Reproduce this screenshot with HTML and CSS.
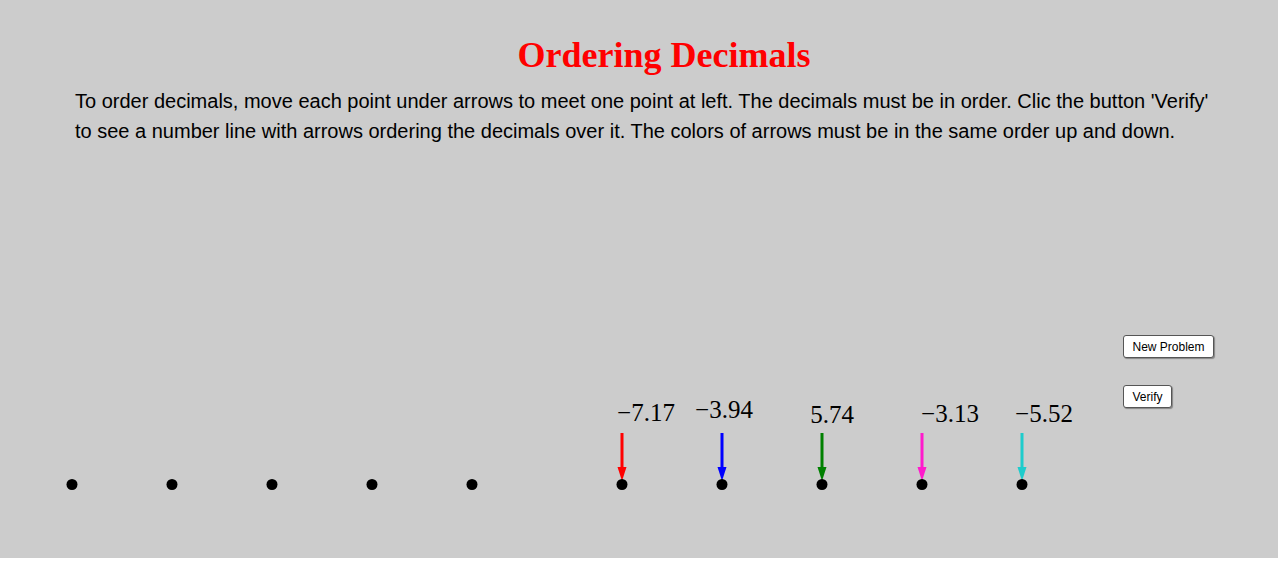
FILE: index.html
```html
<!DOCTYPE html>
<html>
<head>
<meta charset="utf-8">
<link rel="stylesheet" href="styles.css">
</head>
<body>
<div class="app">
  <h1 class="title">Ordering Decimals</h1>
  <p class="intro">To order decimals, move each point under arrows to meet one point at left. The decimals must be in order. Clic the button 'Verify' to see a number line with arrows ordering the decimals over it. The colors of arrows must be in the same order up and down.</p>
  <svg class="canvas" width="1278" height="558" viewBox="0 0 1278 558">
    <g class="labels">
      <text x="646" y="421">−7.17</text>
      <text x="724" y="418">−3.94</text>
      <text x="832" y="423">5.74</text>
      <text x="950" y="422">−3.13</text>
      <text x="1044" y="422">−5.52</text>
    </g>
    <g stroke-width="3">
      <line x1="622" y1="433" x2="622" y2="468" stroke="#ff0000"/>
      <polygon points="617.5,467 626.5,467 622,481" fill="#ff0000"/>
      <line x1="722" y1="433" x2="722" y2="468" stroke="#0000ff"/>
      <polygon points="717.5,467 726.5,467 722,481" fill="#0000ff"/>
      <line x1="822" y1="433" x2="822" y2="468" stroke="#008000"/>
      <polygon points="817.5,467 826.5,467 822,481" fill="#008000"/>
      <line x1="922" y1="433" x2="922" y2="468" stroke="#ff1acc"/>
      <polygon points="917.5,467 926.5,467 922,481" fill="#ff1acc"/>
      <line x1="1022" y1="433" x2="1022" y2="468" stroke="#1ecccc"/>
      <polygon points="1017.5,467 1026.5,467 1022,481" fill="#1ecccc"/>
    </g>
    <g fill="#000">
      <circle cx="72" cy="484.5" r="5.5"/>
      <circle cx="172" cy="484.5" r="5.5"/>
      <circle cx="272" cy="484.5" r="5.5"/>
      <circle cx="372" cy="484.5" r="5.5"/>
      <circle cx="472" cy="484.5" r="5.5"/>
      <circle cx="622" cy="484.5" r="5.5"/>
      <circle cx="722" cy="484.5" r="5.5"/>
      <circle cx="822" cy="484.5" r="5.5"/>
      <circle cx="922" cy="484.5" r="5.5"/>
      <circle cx="1022" cy="484.5" r="5.5"/>
    </g>
  </svg>
  <button class="btn btn-new">New Problem</button>
  <button class="btn btn-verify">Verify</button>
</div>
</body>
</html>
```
FILE: styles.css
```css
html, body {
  margin: 0;
  padding: 0;
  background: #ffffff;
}
.app {
  position: relative;
  width: 1278px;
  height: 558px;
  background: #cccccc;
  overflow: hidden;
}
.title {
  position: relative;
  z-index: 1;
  margin: 0;
  padding: 35px 0 0 50px;
  text-align: center;
  font-family: "Liberation Serif", serif;
  font-weight: bold;
  font-size: 36px;
  line-height: 40px;
  color: #ff0000;
}
.intro {
  position: relative;
  z-index: 1;
  margin: 11px 0 0 75px;
  width: 1150px;
  font-family: "Liberation Sans", Arial, sans-serif;
  font-size: 20px;
  line-height: 30px;
  color: #000000;
}
.canvas {
  position: absolute;
  left: 0;
  top: 0;
}
.labels text {
  font-family: "Liberation Serif", serif;
  font-size: 25px;
  text-anchor: middle;
  fill: #000;
}
.btn {
  position: absolute;
  z-index: 2;
  height: 23px;
  padding: 0;
  white-space: nowrap;
  background: #ffffff;
  border: 1px solid #555555;
  border-radius: 3px;
  font-family: "Liberation Sans", Arial, sans-serif;
  font-size: 12px;
  color: #000;
  box-shadow: 1px 1px 1px rgba(0,0,0,0.35);
}
.btn-new {
  left: 1123px;
  top: 335px;
  width: 91px;
}
.btn-verify {
  left: 1123px;
  top: 385px;
  width: 49px;
}
```
